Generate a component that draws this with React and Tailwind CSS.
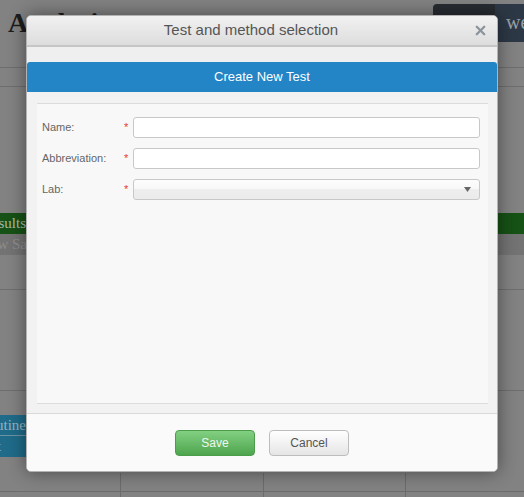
import { X } from 'lucide-react';

function Field({ label, children }) {
  return (
    <div className="flex items-center h-[21px]">
      <div className="w-[82px] text-[11px] text-[#666]">{label}</div>
      <div className="w-[9px] text-[11px] text-[#e53935] self-start pt-[2px]">*</div>
      <div className="flex-1 h-full">{children}</div>
    </div>
  );
}

export default function App() {
  return (
    <div className="relative w-full h-[497px] overflow-hidden bg-[#828282] font-['Liberation_Serif',serif]">
      {/* page behind the dialog */}
      <div className="flex flex-col">
        <div className="h-[46px] flex justify-between items-start">
          <div className="pl-[8px] pt-[9px] text-[28px] leading-none font-bold text-[#1c1c1c]">Analysis</div>
          <div className="mt-[4px] h-[38px] w-[91px] flex rounded-tl-[4px] overflow-hidden">
            <div className="w-[62px] bg-[#272c32]"></div>
            <div className="flex-1 bg-[#2d3846] pl-[11px] pt-[8px] text-[20px] leading-none text-[#97a1ab] whitespace-nowrap overflow-hidden">welcome</div>
          </div>
        </div>
        <div className="h-[22px] border-b border-[#6e6e6e]"></div>
        <div className="h-[19px] border-b border-[#6e6e6e]"></div>
        <div className="h-[126px]"></div>
        <div className="h-[21px] bg-[#165116] flex">
          <div className="w-[26px] flex justify-end overflow-hidden whitespace-nowrap text-[15px] leading-[21px] text-[#a9b9a9]">Results</div>
        </div>
        <div className="h-[21px] bg-[#737373] flex">
          <div className="w-[27px] flex justify-end overflow-hidden whitespace-nowrap text-[15px] leading-[21px] text-[#8d8d8d]">New Sa</div>
        </div>
        <div className="h-[35px] border-b border-[#6e6e6e]"></div>
        <div className="h-[101px] border-b border-[#6e6e6e]"></div>
        <div className="h-[24px]"></div>
        <div className="h-[42px] flex">
          <div className="w-[26px] bg-[#1f6b89] flex flex-col text-[15px] text-[#93b2c2]">
            <div className="h-[21px] border-b border-[#6b93a6] flex justify-end overflow-hidden whitespace-nowrap leading-[21px]">Routine</div>
            <div className="flex-1 flex overflow-hidden whitespace-nowrap leading-[20px] -ml-[3px]">t</div>
          </div>
        </div>
        <div className="h-[16px]"></div>
        <div className="grid grid-cols-[121px_143px_142px_1fr]">
          <div className="h-[19px] border-r border-b border-[#6c6c6c]"></div>
          <div className="h-[19px] border-r border-b border-[#6c6c6c]"></div>
          <div className="h-[19px] border-r border-b border-[#6c6c6c]"></div>
          <div className="h-[19px] border-b border-[#6c6c6c]"></div>
          <div className="h-[19px] border-r border-[#6c6c6c]"></div>
          <div className="h-[19px] border-r border-[#6c6c6c]"></div>
          <div className="h-[19px] border-r border-[#6c6c6c]"></div>
          <div className="h-[19px]"></div>
        </div>
      </div>

      {/* dialog */}
      <div className="absolute inset-0 flex justify-center items-start pt-[15px] font-['Liberation_Sans',Arial,sans-serif]">
        <div className="w-[472px] h-[457px] flex flex-col rounded-[5px] border border-[#b3b3b3] bg-[#efefef] overflow-hidden shadow-[0_0_18px_rgba(0,0,0,0.45)]">
          <div className="relative h-[31px] shrink-0 border-b-2 border-[#c6c6c6] bg-gradient-to-b from-[#f1f1f1] to-[#dddddd] flex items-center justify-center pr-[22px] text-[15px] text-[#555]">
            Test and method selection
            <X className="absolute right-[9px] top-[7px] w-[15px] h-[15px] text-[#8c949b]" strokeWidth={3.6} />
          </div>

          <div className="flex flex-col pt-[15px]">
            <div className="h-[30px] rounded-t-[3px] bg-[#2384c6] flex items-center justify-center text-[13px] text-white">
              Create New Test
            </div>
            <div className="bg-[#f2f2f2] pl-[10px] pr-[9px] pt-[11px] pb-[9px]">
              <div className="h-[301px] bg-[#f8f8f8] border-t border-b border-[#dcdcdc] pl-[5px] pr-[8px] pt-[13px] flex flex-col gap-[10px]">
                <Field label="Name:">
                  <div className="h-full rounded-[3px] border border-[#c8c8c8] bg-white"></div>
                </Field>
                <Field label="Abbreviation:">
                  <div className="h-full rounded-[3px] border border-[#c8c8c8] bg-white"></div>
                </Field>
                <Field label="Lab:">
                  <div className="h-full rounded-[3px] border border-[#c8c8c8] bg-[linear-gradient(#fdfdfd_0%,#f8f8f8_45%,#eeeeee_50%,#ebebeb_100%)] flex items-center justify-end pr-[8px]">
                    <svg width="7" height="5" viewBox="0 0 7 5">
                      <path d="M0 0H7L3.5 5Z" fill="#666" />
                    </svg>
                  </div>
                </Field>
              </div>
            </div>
          </div>

          <div className="h-[58px] shrink-0 border-t border-[#d9d9d9] bg-[#fafafa] flex items-center justify-center gap-[14px]">
            <button className="w-[80px] h-[26px] rounded-[4px] border border-[#4b9c4b] bg-gradient-to-b from-[#82d082] to-[#4ea54e] text-[12px] text-[#eef7ee]">
              Save
            </button>
            <button className="w-[80px] h-[26px] rounded-[4px] border border-[#bdbdbd] bg-gradient-to-b from-[#ffffff] to-[#e5e5e5] text-[12px] text-[#555]">
              Cancel
            </button>
          </div>
        </div>
      </div>
    </div>
  );
}
